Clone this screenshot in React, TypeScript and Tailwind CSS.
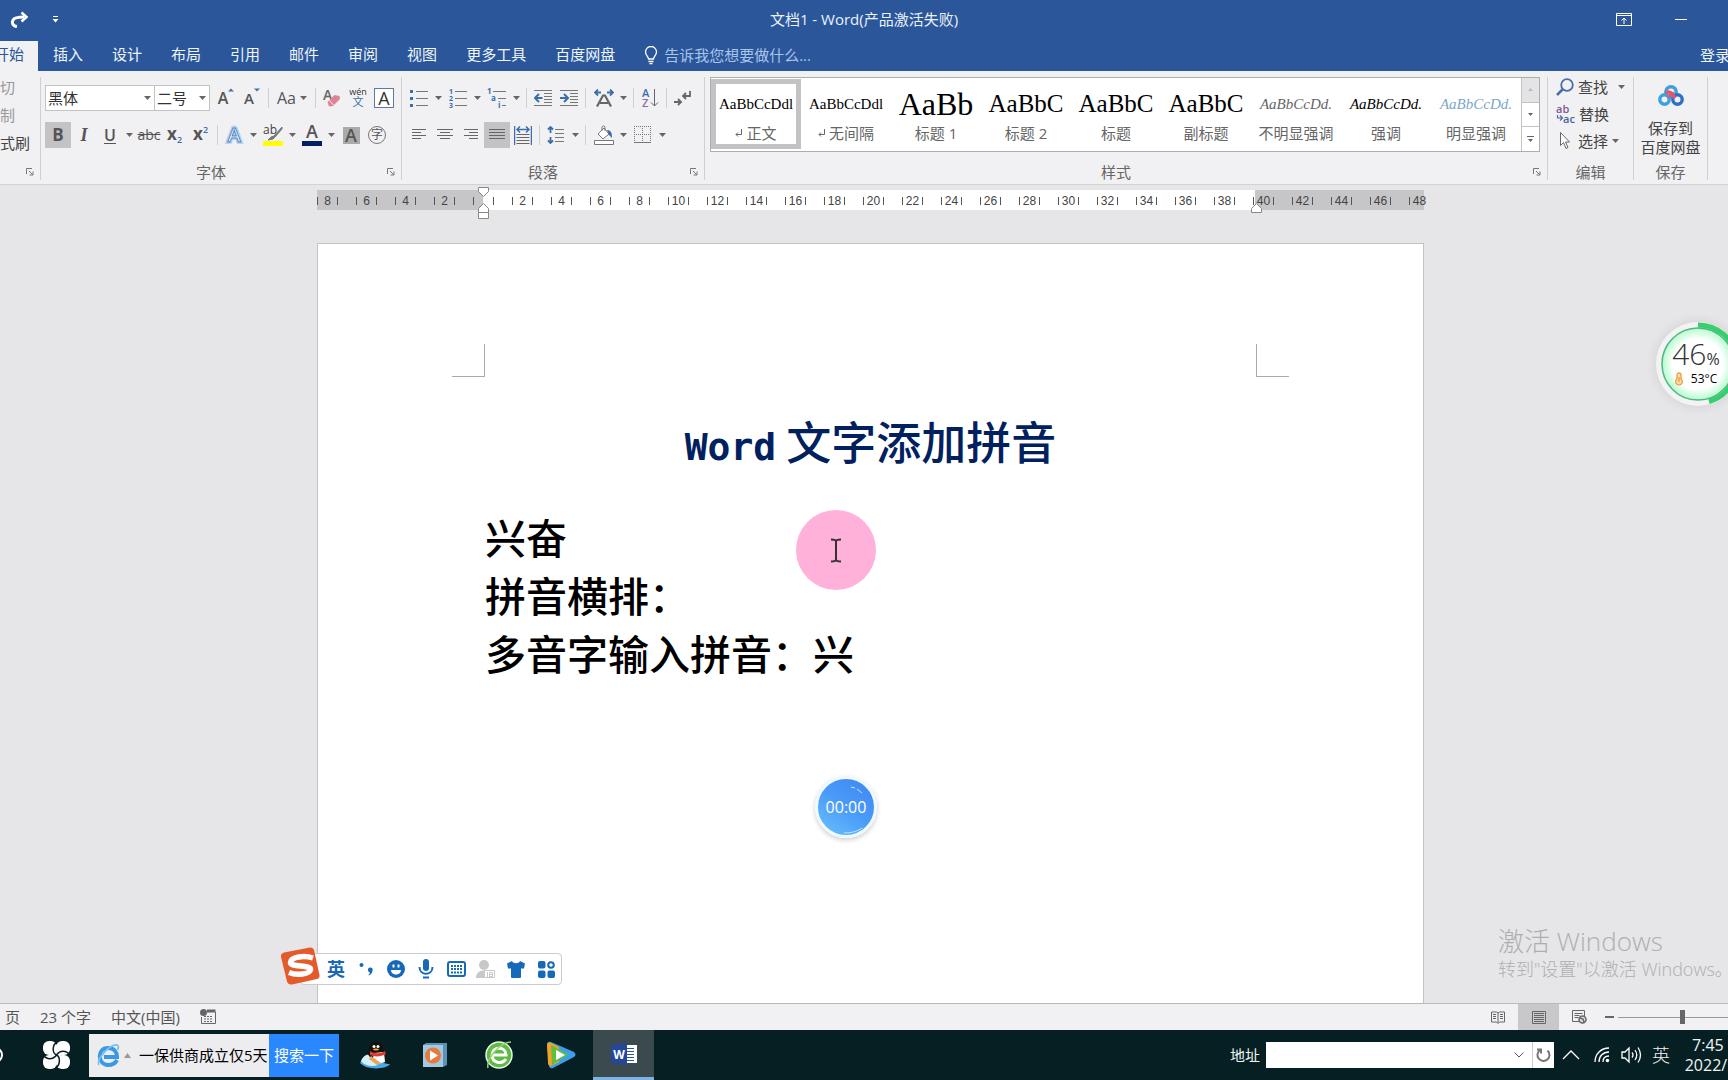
import clsx from 'clsx';
import type { ReactNode } from 'react';

const tabs = ['开始', '插入', '设计', '布局', '引用', '邮件', '审阅', '视图', '更多工具', '百度网盘'];

const rulerMarks = [
  '8', '6', '4', '2', '', '2', '4', '6', '8', '10', '12', '14', '16', '18', '20', '22', '24',
  '26', '28', '30', '32', '34', '36', '38', '40', '42', '44', '46', '48',
];

interface StyleItem {
  name: string;
  sample: string;
  className: string;
  mark?: boolean;
}

const styleItems: StyleItem[] = [
  { name: '正文', sample: 'AaBbCcDdl', className: 'text-[15px] text-black', mark: true },
  { name: '无间隔', sample: 'AaBbCcDdl', className: 'text-[15px] text-black', mark: true },
  { name: '标题 1', sample: 'AaBb', className: 'text-[32px] text-black' },
  { name: '标题 2', sample: 'AaBbC', className: 'text-[25px] text-black' },
  { name: '标题', sample: 'AaBbC', className: 'text-[25px] text-black' },
  { name: '副标题', sample: 'AaBbC', className: 'text-[25px] text-black' },
  { name: '不明显强调', sample: 'AaBbCcDd.', className: 'text-[15px] italic text-[#666]' },
  { name: '强调', sample: 'AaBbCcDd.', className: 'text-[15px] italic text-black' },
  { name: '明显强调', sample: 'AaBbCcDd.', className: 'text-[15px] italic text-[#7da7cc]' },
];

function Caret({ className }: { className?: string }) {
  return (
    <svg width="7" height="4" viewBox="0 0 7 4" className={clsx('shrink-0', className)}>
      <path d="M0 0h7L3.5 4z" fill="#666" />
    </svg>
  );
}

function Divider() {
  return <div className="mx-[3px] h-5 w-px shrink-0 bg-[#d0cfd2]" />;
}

function Tool({ label, active, children }: { label: string; active?: boolean; children: ReactNode }) {
  return (
    <button
      aria-label={label}
      className={clsx('flex h-[26px] w-[26px] shrink-0 items-center justify-center', active && 'bg-[#c3c2c5]')}
    >
      {children}
    </button>
  );
}

function SplitTool({ label, children }: { label: string; children: ReactNode }) {
  return (
    <button aria-label={label} className="flex h-[26px] w-[39px] shrink-0 items-center">
      <span className="flex w-[26px] justify-center">{children}</span>
      <Caret className="ml-[3px]" />
    </button>
  );
}

function Launcher() {
  return (
    <button aria-label="更多选项" className="flex size-5 items-center justify-center">
      <svg width="8" height="8" viewBox="0 0 8 8" fill="none" stroke="#777">
        <path d="M.5 6V.5H6M3 3l3.500 3.500M7 3.500V7H3.500" />
      </svg>
    </button>
  );
}

function Group({
  label,
  launcher,
  className,
  children,
}: {
  label?: string;
  launcher?: boolean;
  className?: string;
  children: ReactNode;
}) {
  return (
    <section className={clsx('flex flex-col', className)}>
      {children}
      <div className="mt-auto mb-[2px] flex h-5 items-center">
        <span className="flex-1 text-center text-[#666]">{label}</span>
        {launcher && <Launcher />}
      </div>
    </section>
  );
}

function GroupDivider() {
  return <div className="mt-1.5 mb-1 w-px shrink-0 bg-[#d0cfd2]" />;
}

function Letter({ children, className }: { children: ReactNode; className: string }) {
  return <span className={clsx('leading-5 text-[#555]', className)}>{children}</span>;
}

/* Four text lines; x and width given per line */
function Lines({ rows }: { rows: [number, number][] }) {
  return (
    <svg width="18" height="14" viewBox="0 0 18 14" stroke="#666">
      {rows.map(([x, w], i) => (
        <path key={i} d={`M${x} ${i * 3 + 1.5}h${w}`} />
      ))}
    </svg>
  );
}

function TitleBar() {
  return (
    <header className="grid h-[41px] grid-cols-[1fr_auto_1fr] items-center pb-0.5 text-[#e9f1fb]">
      <div className="flex items-center pl-2.5">
        <button aria-label="重做" className="flex w-[26px]">
          <svg width="20" height="18" viewBox="0 0 20 18" fill="none" stroke="#fff" strokeWidth="3">
            <path d="M7 15.500c-4.500-.5-5.500-4-4-6.500C4.500 6.500 8 6 14 6" />
            <path d="M11.500 1.500L16.500 6l-5 4.500" strokeWidth="2.500" />
          </svg>
        </button>
        <button aria-label="自定义快速访问工具栏" className="ml-4 flex">
          <svg width="7" height="7" viewBox="0 0 7 7" fill="#fff">
            <path d="M1 0h5v1H1zM0.500 3h6L3.500 6.500z" />
          </svg>
        </button>
      </div>
      <h1 className="pb-0.5">文档1 - Word(产品激活失败)</h1>
      <div className="flex justify-end pr-[19px]">
        <button aria-label="功能区显示选项" className="flex w-[57px] justify-center">
          <svg width="16" height="13" viewBox="0 0 16 13" fill="none" stroke="#fff">
            <path d="M.5.5h15v12H.5zM.5 2.500h15M8 11V5M5.500 7.500L8 5l2.500 2.500" />
          </svg>
        </button>
        <button aria-label="最小化" className="flex w-[57px] items-center justify-center">
          <span className="h-px w-3 bg-white" />
        </button>
      </div>
    </header>
  );
}

function TabBar() {
  return (
    <nav className="-ml-5 flex h-[30px] items-stretch gap-px text-[#eef5fc]">
      {tabs.map((tab, i) => (
        <button
          key={tab}
          className={clsx('shrink-0 px-3.5 pb-1', i === 0 && 'bg-[#f1f0f2] text-[#2b579a]')}
        >
          {tab}
        </button>
      ))}
      <label className="ml-3.5 flex flex-1 items-center gap-1.5 pb-0.5">
        <svg width="14" height="19" viewBox="0 0 14 19" fill="none" stroke="#fff" strokeWidth="1.3">
          <path d="M4.500 13c0-2.500-3-3.500-3-7a5.500 5.500 0 0 1 11 0c0 3.500-3 4.500-3 7zM4.500 15.500h5M5.500 17.700h3" />
        </svg>
        <input
          aria-label="告诉我您想要做什么"
          placeholder="告诉我您想要做什么..."
          className="w-60 bg-transparent outline-none placeholder:text-[#aac3ea]"
        />
      </label>
      <a href="#login" className="-mr-0.5 flex shrink-0 items-center pb-0.5">
        登录
      </a>
    </nav>
  );
}

function FontGroup() {
  return (
    <Group label="字体" launcher className="w-[360px] shrink-0 pt-3.5">
      <div className="flex items-center pl-1">
        <div className="relative">
          <select aria-label="字体" className="h-[26px] w-[110px] appearance-none border border-[#c3c2c5] bg-white pl-0.5 text-[#333]">
            <option>黑体</option>
          </select>
          <Caret className="absolute top-[11px] right-1" />
        </div>
        <div className="relative -ml-px">
          <select aria-label="字号" className="h-[26px] w-14 appearance-none border border-[#c3c2c5] bg-white pl-0.5 text-[#333]">
            <option>二号</option>
          </select>
          <Caret className="absolute top-[11px] right-1" />
        </div>
        <div className="w-[3px]" />
        <Tool label="增大字号">
          <Letter className="flex text-base font-semibold">
            A<svg width="6" height="4" viewBox="0 0 6 4"><path d="M0 3.500L3 .5l3 3z" fill="#4472a8" /></svg>
          </Letter>
        </Tool>
        <Tool label="减小字号">
          <Letter className="flex text-[15px] font-semibold">
            A<svg width="6" height="4" viewBox="0 0 6 4"><path d="M0 .5h6l-3 3z" fill="#4472a8" /></svg>
          </Letter>
        </Tool>
        <Divider />
        <button aria-label="更改大小写" className="flex h-[26px] w-10 items-center justify-center gap-1 text-base text-[#555]">
          Aa
          <Caret />
        </button>
        <Divider />
        <Tool label="清除格式">
          <svg width="18" height="20" viewBox="0 0 18 20">
            <text x="0" y="12" fontSize="14" fontWeight="600" fill="#666">A</text>
            <path d="M4.500 14l7-7 5 1 .5 3-7 7-4 .5z" fill="#df8296" />
            <path d="M6 12l4.500 5" stroke="#f1f0f2" />
          </svg>
        </Tool>
        <Tool label="拼音指南">
          <svg width="18" height="20" viewBox="0 0 18 20" textAnchor="middle">
            <text x="9" y="7" fontSize="9" fill="#333">wén</text>
            <text x="9" y="18" fontSize="11" fill="#3c6fa8">文</text>
          </svg>
        </Tool>
        <Tool label="字符边框">
          <span className="flex size-5 items-center justify-center border border-[#5d7a9c] bg-white text-lg leading-5 text-[#333]">A</span>
        </Tool>
      </div>
      <div className="mt-[11px] flex items-center pl-1">
        <Tool label="加粗" active>
          <Letter className="text-[17px] font-bold">B</Letter>
        </Tool>
        <Tool label="倾斜">
          <Letter className="font-['Liberation_Serif'] text-lg font-bold italic">I</Letter>
        </Tool>
        <SplitTool label="下划线">
          <Letter className="text-base font-semibold underline underline-offset-2">U</Letter>
        </SplitTool>
        <Tool label="删除线">
          <span className="text-sm leading-4 text-[#555] line-through">abc</span>
        </Tool>
        <Tool label="下标">
          <svg width="18" height="18" viewBox="0 0 18 18">
            <text x="1" y="14" fontSize="17" fontWeight="700" fill="#555">x</text>
            <text x="11" y="17" fontSize="9" fontWeight="600" fill="#3c6fa8">2</text>
          </svg>
        </Tool>
        <Tool label="上标">
          <svg width="18" height="18" viewBox="0 0 18 18">
            <text x="1" y="14" fontSize="17" fontWeight="700" fill="#555">x</text>
            <text x="11" y="7" fontSize="9" fontWeight="600" fill="#3c6fa8">2</text>
          </svg>
        </Tool>
        <Divider />
        <SplitTool label="文本效果">
          <svg width="20" height="20" viewBox="0 0 20 20">
            <text x="10" y="17" fontSize="20" textAnchor="middle" fontWeight="600" fill="#fff" stroke="#bcd6ef" strokeWidth="4" paintOrder="stroke">A</text>
            <text x="10" y="17" fontSize="20" textAnchor="middle" fontWeight="600" fill="#fff" stroke="#4a86c4" strokeWidth="1">A</text>
          </svg>
        </SplitTool>
        <SplitTool label="突出显示">
          <svg width="20" height="22" viewBox="0 0 20 22">
            <text x="0" y="10" fontSize="12" fill="#444">ab</text>
            <path d="M19 3l-8 9-3 1-3 3 5-1 2-2 7-8z" fill="#777" stroke="#777" />
            <path d="M0 17h20v5H0z" fill="#ffff00" />
          </svg>
        </SplitTool>
        <SplitTool label="字体颜色">
          <svg width="20" height="22" viewBox="0 0 20 22">
            <text x="10" y="14" fontSize="18" textAnchor="middle" fontWeight="600" fill="#555">A</text>
            <path d="M0 17h20v5H0z" fill="#002060" />
          </svg>
        </SplitTool>
        <Tool label="字符底纹">
          <span className="flex h-[17px] w-[17px] items-center justify-center bg-[#aaa] text-lg leading-4 font-semibold text-[#555]">A</span>
        </Tool>
        <Tool label="带圈字符">
          <span className="flex size-[18px] items-center justify-center rounded-full border border-[#777] text-xs leading-4 text-[#555]">字</span>
        </Tool>
      </div>
    </Group>
  );
}

function ParagraphGroup() {
  return (
    <Group label="段落" launcher className="w-[302px] shrink-0 pt-3.5">
      <div className="flex items-center pl-1">
        <SplitTool label="项目符号">
          <svg width="18" height="18" viewBox="0 0 18 18">
            <path d="M6 2.500h12M6 9.500h12M6 16.500h12" stroke="#777" />
            <path d="M0 1h3v3H0zM0 8h3v3H0zM0 15h3v3H0z" fill="#3c6fa8" />
          </svg>
        </SplitTool>
        <SplitTool label="编号">
          <svg width="18" height="20" viewBox="0 0 18 20" fontSize="7" fontWeight="700" fill="#3c6fa8">
            <path d="M6 3.500h12M6 10.500h12M6 17.500h12" stroke="#777" />
            <text x="0" y="6">1</text>
            <text x="0" y="13">2</text>
            <text x="0" y="20">3</text>
          </svg>
        </SplitTool>
        <SplitTool label="多级列表">
          <svg width="20" height="20" viewBox="0 0 20 20" fontSize="8" fontWeight="700" fill="#3c6fa8">
            <path d="M6 3.500h13M11 10.500h8M15 17.500h4" stroke="#777" />
            <text x="0" y="6">1</text>
            <text x="4" y="13">a</text>
            <text x="11" y="20">i</text>
          </svg>
        </SplitTool>
        <Divider />
        <Tool label="减少缩进量">
          <svg width="18" height="17" viewBox="0 0 18 17" fill="none" stroke="#777">
            <path d="M0 .5h18M10 3.500h8M10 6.500h8M10 9.500h8M10 12.500h8M0 15.500h18" />
            <path d="M8.500 8h-7M5 4L1 8l4 4" stroke="#3c6fa8" strokeWidth="2" />
          </svg>
        </Tool>
        <Tool label="增加缩进量">
          <svg width="18" height="17" viewBox="0 0 18 17" fill="none" stroke="#777">
            <path d="M0 .5h18M10 3.500h8M10 6.500h8M10 9.500h8M10 12.500h8M0 15.500h18" />
            <path d="M0 8h7M4 4l4 4-4 4" stroke="#3c6fa8" strokeWidth="2" />
          </svg>
        </Tool>
        <Divider />
        <div className="ml-0.5 flex">
          <SplitTool label="中文版式">
            <svg width="20" height="18" viewBox="0 0 20 18" fill="none">
              <path d="M1 3.500h6M4 .5l-3 3 3 3M13 3.500h6M16 .5l3 3-3 3" stroke="#3c6fa8" strokeWidth="1.800" />
              <path d="M3 17.500l6-11h2l6 11M6 14h8" stroke="#666" strokeWidth="2.200" />
            </svg>
          </SplitTool>
        </div>
        <Divider />
        <Tool label="排序">
          <svg width="18" height="20" viewBox="0 0 18 20" fontSize="11" fontWeight="600">
            <text x="1" y="9" fill="#3c6fa8">A</text>
            <text x="1" y="19" fill="#8b6aa8">Z</text>
            <path d="M13.500 1v17M10 14.500l3.500 3.500 3.500-3.500" fill="none" stroke="#666" />
          </svg>
        </Tool>
        <Divider />
        <Tool label="显示编辑标记">
          <svg width="18" height="16" viewBox="0 0 18 16" fill="none" stroke="#666" strokeWidth="1.800">
            <path d="M16 1v5H9M12 3L9 6l3 3M0 12h7M4 9l3 3-3 3" />
          </svg>
        </Tool>
      </div>
      <div className="mt-[11px] flex items-center pl-1">
        <Tool label="左对齐"><Lines rows={[[2, 14], [2, 9], [2, 14], [2, 9]]} /></Tool>
        <Tool label="居中"><Lines rows={[[1, 16], [4, 10], [1, 16], [4, 10]]} /></Tool>
        <Tool label="右对齐"><Lines rows={[[2, 14], [7, 9], [2, 14], [7, 9]]} /></Tool>
        <Tool label="两端对齐" active><Lines rows={[[1, 16], [1, 16], [1, 16], [1, 16]]} /></Tool>
        <Tool label="分散对齐">
          <svg width="18" height="19" viewBox="0 0 18 19" fill="none" stroke="#666">
            <path d="M2.500 8.500h13M2.500 11.500h13M2.500 14.500h13M2.500 17.500h13" />
            <path d="M.5 0v19M17.500 0v19M3 3.500h12M6 .5l-3 3 3 3M12 .5l3 3-3 3" stroke="#3c6fa8" strokeWidth="1.500" />
          </svg>
        </Tool>
        <Divider />
        <SplitTool label="行和段落间距">
          <svg width="18" height="18" viewBox="0 0 18 18" fill="none" stroke="#777">
            <path d="M8 3.500h9M8 7.500h9M8 11.500h9M8 15.500h9" />
            <path d="M3.500 1v6M1 3.500L3.500 1 6 3.500M3.500 11v6M1 14.500L3.500 17 6 14.500" stroke="#3c6fa8" strokeWidth="1.800" />
          </svg>
        </SplitTool>
        <Divider />
        <div className="ml-0.5 flex">
          <SplitTool label="底纹">
            <svg width="20" height="20" viewBox="0 0 20 20" fill="none" stroke="#777">
              <path d="M4 9l6-6 5 6-6 5z" fill="#fff" />
              <path d="M8 6V2.500a1.500 1.500 0 0 1 3 0V6" />
              <path d="M13 5c4 0 5 3 5 8l-3-3z" fill="#3c6fa8" stroke="none" />
              <path d="M.5 15.500h19v4H.5z" fill="#fff" />
            </svg>
          </SplitTool>
          <SplitTool label="边框">
            <svg width="18" height="18" viewBox="0 0 18 18" fill="none" stroke="#777" strokeDasharray="1 1">
              <path d="M0 .5h17M.5 0v17M8.500 0v17M16.500 0v17M0 8.500h17" />
              <path d="M0 16.500h17" strokeDasharray="none" />
            </svg>
          </SplitTool>
        </div>
      </div>
    </Group>
  );
}

function StylesGroup() {
  return (
    <Group label="样式" launcher className="min-w-0 flex-1 pt-1.5">
      <div className="mr-[7px] ml-[5px] flex h-[75px] border border-[#aeadb0] bg-white">
        <div className="flex min-w-0 flex-1 overflow-hidden">
          {styleItems.map((item, i) => (
            <button
              key={item.name}
              className={clsx(
                'mt-px flex h-[70px] w-[90px] shrink-0 flex-col items-center border-[5px] px-0.5',
                i === 0 ? 'border-[#c3c2c5]' : 'border-transparent',
              )}
            >
              <span
                className={clsx(
                  "h-[39px] font-['Liberation_Serif'] leading-10 whitespace-nowrap",
                  item.className,
                )}
              >
                {item.sample}
              </span>
              <span className="flex items-center gap-1 leading-5 text-[#666]">
                {item.mark && (
                  <svg width="7" height="8" viewBox="0 0 7 8" fill="none" stroke="#666">
                    <path d="M6.500 0v5.500H1M3 3.500l-2 2 2 2" />
                  </svg>
                )}
                {item.name}
              </span>
            </button>
          ))}
        </div>
        <div className="flex w-[18px] flex-col divide-y divide-[#c3c2c5] border-l border-[#c3c2c5]">
          <button aria-label="上一行" className="flex flex-1 items-center justify-center bg-[#e4e3e5]">
            <svg width="5" height="3" viewBox="0 0 5 3"><path d="M0 3L2.500 0 5 3z" fill="#bbb" /></svg>
          </button>
          <button aria-label="下一行" className="flex flex-1 items-center justify-center">
            <svg width="5" height="3" viewBox="0 0 5 3"><path d="M0 0h5L2.500 3z" fill="#666" /></svg>
          </button>
          <button aria-label="其他" className="flex flex-1 items-center justify-center">
            <svg width="7" height="6" viewBox="0 0 7 6" fill="#666"><path d="M0 0h7v1H0zM1 3h5L3.500 6z" /></svg>
          </button>
        </div>
      </div>
    </Group>
  );
}

function EditGroup() {
  return (
    <Group label="编辑" className="w-[85px] shrink-0 pt-0.5">
      <div className="flex flex-col pl-2 text-[#444]">
        <button className="flex h-[27px] items-center gap-1">
          <svg width="18" height="18" viewBox="0 0 18 18" fill="none" stroke="#4a6da7">
            <circle cx="11" cy="7" r="5.800" strokeWidth="1.800" />
            <path d="M7 11l-6 6" strokeWidth="2.500" />
          </svg>
          查找
          <Caret className="ml-1.5" />
        </button>
        <button className="flex h-[27px] items-center gap-1">
          <svg width="19" height="20" viewBox="0 0 19 20" fontSize="11" fontWeight="600">
            <text x="0" y="9" fill="#7d5a96">ab</text>
            <text x="7" y="19" fill="#44699b">ac</text>
            <path d="M1.500 11v3H6M4 11.500L6.500 14 4 16.500" fill="none" stroke="#4a6da7" strokeWidth="1.200" />
          </svg>
          替换
        </button>
        <button className="flex h-[27px] items-center gap-1">
          <svg width="18" height="19" viewBox="0 0 18 19" fill="#fff" stroke="#666">
            <path d="M4.500 1.500v13l3-3 2.500 6 2-1-2.500-5.500h4z" />
          </svg>
          选择
          <Caret />
        </button>
      </div>
    </Group>
  );
}

function SaveGroup() {
  return (
    <Group label="保存" className="w-[73px] shrink-0 pt-3.5">
      <button className="flex flex-col items-center text-[#444]">
        <svg width="26" height="22" viewBox="0 0 26 22" fill="none" strokeWidth="3.400">
          <circle cx="13" cy="7" r="5.200" stroke="#3d9fdc" />
          <circle cx="6.500" cy="14.500" r="4.700" stroke="#39a3dd" />
          <circle cx="19.500" cy="14.500" r="4.700" stroke="#2f6fc4" />
          <path d="M8 8.500c2-2.500 4.500-1.500 6 .5l3 4" stroke="#e0566b" />
          <path d="M9.500 12.500l3.500-3.500 3-1.500" stroke="#e0566b" strokeWidth="2.500" />
        </svg>
        <span className="mt-3 leading-[19px]">
          保存到
          <br />
          百度网盘
        </span>
      </button>
    </Group>
  );
}

function Ribbon() {
  return (
    <div className="flex h-[114px] border-b border-[#d2d1d4] bg-[#f1f0f2]">
      <section className="flex w-10 shrink-0 flex-col pt-0.5">
        <button className="h-7 text-left text-[#999]">切</button>
        <button className="h-7 text-left text-[#999]">制</button>
        <button className="h-7 text-left text-[#444]">式刷</button>
        <div className="mt-auto mb-[2px] flex justify-end">
          <Launcher />
        </div>
      </section>
      <GroupDivider />
      <FontGroup />
      <GroupDivider />
      <ParagraphGroup />
      <GroupDivider />
      <StylesGroup />
      <GroupDivider />
      <EditGroup />
      <GroupDivider />
      <SaveGroup />
      <GroupDivider />
      <div className="w-5 shrink-0" />
    </div>
  );
}

function Ruler() {
  return (
    <div className="relative flex h-5 w-full max-w-[1107px] bg-[linear-gradient(to_right,#c6c5c8_166px,#fff_166px,#fff_938px,#c6c5c8_938px)] pt-0.5 text-xs text-[#444]">
      {rulerMarks.map((mark, i) => (
        <div key={i} className="flex w-[39px] shrink-0 items-center">
          <span className="h-2 w-px bg-[#555]" />
          <span className="w-[19px] text-center font-['Liberation_Sans']">{mark}</span>
          {i < rulerMarks.length - 1 && <span className="h-2 w-px bg-[#555]" />}
        </div>
      ))}
      <svg width="12" height="32" viewBox="0 0 12 32" className="absolute -top-[3px] left-[161px]" fill="#fff" stroke="#888">
        <path d="M.5.500h10v4l-5 5-5-5zM5.500 16.500l5 5v4H.5v-4zM.5 25.500h10v6H.5z" />
      </svg>
      <svg width="12" height="10" viewBox="0 0 12 10" className="absolute top-[13px] left-[934px]" fill="#fff" stroke="#888">
        <path d="M5.500.5l5 5v4H.5v-4z" />
      </svg>
    </div>
  );
}

function Page() {
  return (
    <article className="mt-[33px] w-full max-w-[1107px] flex-1 border border-b-0 border-[#c3c2c5] bg-white pt-[100px] pb-60 font-['Noto_Sans_CJK_SC',sans-serif]">
      <div className="flex justify-between px-[134px]">
        <div className="size-[33px] border-r border-b border-[#aaa]" />
        <div className="size-[33px] border-b border-l border-[#aaa]" />
      </div>
      <div className="px-[167px]">
        <h2 className="mt-8 text-center text-[45px] leading-[64px] font-medium text-[#002060]">
          <span className="font-['DejaVu_Sans_Mono',monospace] text-[38px] font-bold">Word</span> 文字添加拼音
        </h2>
        <div className="mt-7 text-[41px] leading-[58px] font-medium text-black">
          <p>兴奋</p>
          <p>拼音横排：</p>
          <p>多音字输入拼音：兴</p>
        </div>
      </div>
    </article>
  );
}

function SogouBar() {
  return (
    <div className="absolute bottom-[18px] left-[280px] flex items-center text-[#1668b8]">
      <div className="ml-5 flex h-8 items-center rounded-sm border border-[#c9cbd6] bg-white pl-5">
        <button className="w-[30px] text-lg leading-6 font-bold">英</button>
        <button aria-label="标点" className="flex w-[30px] justify-center">
          <svg width="14" height="14" viewBox="0 0 14 14" fill="currentColor">
            <circle cx="2.500" cy="3" r="2" />
            <path d="M9 8a2.300 2.300 0 1 1 4.500.5c0 2-1.500 4-3.500 5l-.5-.8c1.200-.7 1.500-1.500 1.500-2.200C10 10.300 9 9.500 9 8z" />
          </svg>
        </button>
        <button aria-label="表情" className="flex w-[30px] justify-center">
          <svg width="18" height="18" viewBox="0 0 18 18">
            <circle cx="9" cy="9" r="9" fill="currentColor" />
            <path d="M5.500 4.500h2v3h-2zM10.500 4.500h2v3h-2zM4 10h10c0 6-10 6-10 0z" fill="#fff" />
          </svg>
        </button>
        <button aria-label="语音" className="flex w-[30px] justify-center">
          <svg width="16" height="20" viewBox="0 0 16 20" fill="none" stroke="currentColor" strokeWidth="2">
            <rect x="5" y="0" width="6" height="12" rx="3" fill="currentColor" stroke="none" />
            <path d="M1.500 8c0 9 13 9 13 0M5 18.500h6" />
          </svg>
        </button>
        <button aria-label="软键盘" className="flex w-[30px] justify-center">
          <svg width="19" height="16" viewBox="0 0 19 16">
            <rect x="1" y="1" width="17" height="14" rx="2" fill="none" stroke="currentColor" strokeWidth="2" />
            <path d="M4 5h11M4 8h11M4 11.500h11" stroke="currentColor" strokeWidth="2" strokeDasharray="2 1" />
          </svg>
        </button>
        <button aria-label="登录" className="flex w-[30px] justify-center text-[#c8c8ca]">
          <svg width="20" height="19" viewBox="0 0 20 19">
            <circle cx="8" cy="5" r="5" fill="currentColor" />
            <path d="M0 18c0-5 3-7.500 8-7.500v7.500z" fill="currentColor" />
            <path d="M8.500 10.500h10v7h-10z" fill="#fff" stroke="currentColor" />
            <path d="M11.500 12v5M13.500 12.500h3v4h-3zM13.500 14.500h3" fill="none" stroke="currentColor" />
          </svg>
        </button>
        <button aria-label="皮肤" className="flex w-[30px] justify-center">
          <svg width="18" height="17" viewBox="0 0 18 17" fill="currentColor">
            <path d="M5 0c1 3 7 3 8 0l5 2.500-1 5h-3V16q0 1-1 1H5q-1 0-1-1V7.500H1l-1-5z" />
          </svg>
        </button>
        <button aria-label="工具箱" className="flex w-[30px] justify-center">
          <svg width="17" height="17" viewBox="0 0 17 17" fill="currentColor">
            <rect width="7.500" height="7.500" rx="2" />
            <circle cx="13" cy="4" r="2.800" fill="none" stroke="currentColor" strokeWidth="2" />
            <rect y="9.500" width="7.500" height="7.500" rx="2" />
            <rect x="9.500" y="9.500" width="7.500" height="7.500" rx="2" />
          </svg>
        </button>
      </div>
      <svg width="40" height="38" viewBox="0 0 40 38" className="absolute -top-1.5 left-0">
        <path d="M4 5.500L30 .5q3-.5 4 2.500l5.500 25q.5 3-2.500 4L12 37.500q-4 .5-5-3L1 10q-.5-3.500 3-4.500z" fill="#e55a2a" />
        <path d="M33 11C24 8 11 10 10.500 15.500 10 20.500 31 17.500 30.500 22.500 30 27.500 16 28.500 9 25.500" fill="none" stroke="#fff" strokeWidth="5.500" />
      </svg>
    </div>
  );
}

function LoadBall() {
  return (
    <div className="absolute top-[137px] -right-3 flex size-[84px] flex-col items-center rounded-full bg-[#f3f3f3] pr-1 shadow-[0_0_8px_3px_rgba(0,0,0,0.06)]">
      <svg width="84" height="84" viewBox="0 0 84 84" className="absolute inset-0">
        <defs>
          <radialGradient id="ball">
            <stop offset="0.700" stopColor="#fff" />
            <stop offset="1" stopColor="#b4fbcb" />
          </radialGradient>
        </defs>
        <path d="M42 3a39 39 0 0 1 11 76.500" fill="none" stroke="#35cf6b" strokeWidth="5" />
        <circle cx="42" cy="42" r="36" fill="url(#ball)" stroke="#4fb585" strokeWidth="1.500" />
      </svg>
      <div className="relative mt-4 font-['Open_Sans'] text-[30px] leading-8 font-light text-[#333]">
        46<span className="text-base font-normal">%</span>
      </div>
      <div className="relative flex items-center gap-2 text-xs leading-4 text-black">
        <svg width="8" height="14" viewBox="0 0 8 14" fill="#fbe0a8" stroke="#ef9a3c" strokeWidth="1.300">
          <path d="M2 7V3a2 2 0 0 1 4 0v4a3.300 3.300 0 1 1-4 0zM4 5v5" />
        </svg>
        53°C
      </div>
    </div>
  );
}

function Workspace() {
  return (
    <main className="relative flex flex-1 flex-col items-center bg-[#e6e6e8] pt-[5px] pl-[13px]">
      <Ruler />
      <Page />

      {/* Click highlight with the text cursor in it */}
      <div className="absolute top-[325px] left-1/2 -ml-[68px] flex size-20 items-center justify-center rounded-full bg-[#ffb1d9]">
        <svg width="10" height="25" viewBox="0 0 10 25" fill="none" stroke="#333" strokeWidth="2">
          <path d="M0 1.500c3 0 5 .5 5 2v18c0 1.500-2 2-5 2M10 1.500c-3 0-5 .5-5 2v18c0 1.500 2 2 5 2" />
        </svg>
      </div>

      <div className="absolute top-[591px] left-1/2 -ml-[49px] flex size-[62px] items-center justify-center rounded-full border-[3px] border-[#eefaff] bg-[linear-gradient(215deg,#3f86f3,#4a9bf8_50%,#68c2fd)] text-base text-white shadow-[0_2px_5px_rgba(0,0,0,0.2)]">
        00:00
        <svg width="56" height="56" viewBox="0 0 56 56" fill="none" stroke="#cbe6ff" className="absolute inset-0">
          <path d="M33 8l4 1M39 10l5 4M26 54c8 0 14-2 18-5" />
        </svg>
      </div>

      <LoadBall />
      <SogouBar />

      <div className="absolute right-0 bottom-5 w-[230px] whitespace-nowrap text-[#aeaeb1]">
        <p className="text-[26px] leading-7 font-light">激活 Windows</p>
        <p className="text-lg leading-7 font-light">转到"设置"以激活 Windows。</p>
      </div>
    </main>
  );
}

function StatusBar() {
  return (
    <footer className="flex h-[27px] items-center border-t border-[#b9b8bb] bg-[#f1f0f2] pl-[5px] text-[#555]">
      <span>页</span>
      <span className="ml-5">23 个字</span>
      <span className="ml-5">中文(中国)</span>
      <svg width="16" height="16" viewBox="0 0 16 16" className="ml-5" fill="none" stroke="#666">
        <circle cx="3.500" cy="3.500" r="3.500" fill="#666" stroke="none" />
        <path d="M7 2h8.500" strokeWidth="3" />
        <path d="M1.500 8v6.500h14V3" />
        <path d="M4 7.500h9M4 10h9M4 12.500h9" strokeDasharray="2 1" />
      </svg>
      <div className="ml-auto flex h-full items-center">
        <button aria-label="阅读视图" className="flex h-full w-10 items-center justify-center">
          <svg width="14" height="13" viewBox="0 0 14 13" fill="none" stroke="#666">
            <path d="M.5 1h5l1.500 1 1.500-1h5v10h-5L7 12.500 5.500 11h-5zM7 2v10M2 3.500h3M2 5.500h3M2 7.500h3M9 3.500h3M9 5.500h3M9 7.500h3" />
          </svg>
        </button>
        <button aria-label="页面视图" className="flex h-full w-[41px] items-center justify-center bg-[#c8c7ca]">
          <svg width="14" height="13" viewBox="0 0 14 13" fill="none" stroke="#666">
            <path d="M.5.500h13v12H.5zM2 2.500h10M2 4.500h10M2 6.500h10M2 8.500h10M2 10.500h10" />
          </svg>
        </button>
        <button aria-label="Web 版式视图" className="flex h-full w-10 items-center justify-center">
          <svg width="15" height="14" viewBox="0 0 15 14" fill="none" stroke="#666">
            <path d="M7 11.500H.5V.5h12V6M2.500 3.500h8M2.500 5.500h5M2.500 7.500h4" />
            <circle cx="10.500" cy="9.500" r="3.500" fill="#ddd" strokeWidth="1.500" />
            <path d="M8 8l3 1 1 3" strokeWidth="1.500" />
          </svg>
        </button>
        <button aria-label="缩小" className="ml-1.5 flex h-full w-[9px] items-center">
          <span className="h-0.5 w-full bg-[#666]" />
        </button>
        <input
          type="range"
          aria-label="缩放"
          defaultValue={50}
          className="-mr-[18px] ml-1 h-full w-32 appearance-none bg-[linear-gradient(#999,#999)] bg-[length:100%_1px] bg-center bg-no-repeat [&::-webkit-slider-thumb]:h-3.5 [&::-webkit-slider-thumb]:w-[5px] [&::-webkit-slider-thumb]:appearance-none [&::-webkit-slider-thumb]:bg-[#666]"
        />
      </div>
    </footer>
  );
}

function Taskbar() {
  return (
    <div className="flex h-[50px] items-center bg-[#061f22] text-[#eef5f5]">
      <button aria-label="搜索" className="w-[3px] overflow-hidden">
        <span className="block size-4 -translate-x-[13px] rounded-full border-2 border-white" />
      </button>
      <button aria-label="风车" className="ml-[39px] flex">
        <svg width="29" height="28" viewBox="0 0 29 28" fill="#fff">
          <rect x="1" y="0" width="14" height="14" rx="6" />
          <rect x="14" y="0" width="14" height="14" rx="6" />
          <rect x="1" y="14" width="14" height="14" rx="6" />
          <rect x="14" y="14" width="14" height="14" rx="6" />
          <path d="M10 9h9v10h-9z" />
          <path d="M14.500 14C10 12 10 4 15 1M14.500 14C18 9 24 9 28 14M14.500 14c4 2 4 10-1 13M14.500 14C11 19 5 19 1 14" fill="none" stroke="#061f22" strokeWidth="1.500" />
        </svg>
      </button>
      <div className="ml-[18px] flex h-[43px] items-center bg-[#ededf0] pl-2">
        <svg width="23" height="24" viewBox="0 0 23 24" fill="none">
          <path d="M20 17c-2 4-6 5-9 5-11-1-11-17 0-17 6 0 9 4 9 9H7" stroke="#3b98e4" strokeWidth="4" />
          <path d="M2 22C-1 16 13 1 20 2c2 .5 1.500 3 .5 5" stroke="#7cc0f2" strokeWidth="1.800" />
        </svg>
        <svg width="7" height="5" viewBox="0 0 7 5" className="ml-1"><path d="M0 5L3.500 0 7 5z" fill="#999" /></svg>
        <input
          aria-label="搜索内容"
          defaultValue="一保供商成立仅5天"
          className="ml-2 w-[130px] bg-transparent text-black outline-none"
        />
        <button className="h-full w-[70px] bg-[#2a88ff] text-white">搜索一下</button>
      </div>
      <button aria-label="QQ" className="ml-[21px] flex">
        <svg width="30" height="28" viewBox="0 0 30 28">
          <path d="M0 22c4-7 8-10 14-7 5 3 10 9 16 8-3 5-22 7-30-1z" fill="#4aa9e4" />
          <path d="M1 20c2-5 6-8 11-5l6 9c-6 2-13 1-17-4z" fill="#d5effb" />
          <ellipse cx="16" cy="7" rx="7" ry="6.500" fill="#111" />
          <path d="M7 11c5-3 14-3 19 0l-2 7-9 3-6-6z" fill="#111" />
          <path d="M14 12l10-1 1 10-7 2-5-6z" fill="#fff" />
          <path d="M10 10c5 3 10 3 15 0l1 3c-5 3-12 3-16 1z" fill="#e23a2c" />
          <path d="M11 15l10 7-4 2-8-6z" fill="#e8a35a" />
          <circle cx="14" cy="5.500" r="1.500" fill="#fff" />
          <circle cx="18" cy="5.500" r="1.500" fill="#fff" />
          <ellipse cx="16" cy="8.500" rx="3" ry="1" fill="#f5a623" />
        </svg>
      </button>
      <button aria-label="播放器" className="ml-[33px] flex">
        <svg width="25" height="26" viewBox="0 0 25 26">
          <path d="M0 3l3-2h21v22l-4 2H0z" fill="#5b92b8" />
          <path d="M0 3h20v22H0z" fill="#a4c9de" />
          <circle cx="10" cy="13.500" r="8" fill="#e57a3c" />
          <path d="M7 8.500l8 5-8 5z" fill="#fff" />
        </svg>
      </button>
      <button aria-label="360浏览器" className="ml-[37px] flex">
        <svg width="28" height="28" viewBox="0 0 28 28" fill="none">
          <circle cx="14" cy="14" r="13" fill="#5fb946" stroke="#e8f7e2" strokeWidth="1.500" />
          <path d="M21 18c-4 6-14 4-14-4 0-9 14-9 14 0H8" stroke="#fff" strokeWidth="3" />
          <path d="M3 27C1 18 14 2 26 1" stroke="#8fd66f" strokeWidth="1.500" />
        </svg>
      </button>
      <button aria-label="腾讯视频" className="ml-[33px] flex">
        <svg width="30" height="28" viewBox="0 0 30 28">
          <path d="M1 4q0-4 4-3l23 10q3 3 0 5L7 27q-4 1-4-3z" fill="#3f9ee6" />
          <path d="M1 4q0-3 3-2.500L13 6v15l-8 4q-3 0-3-3z" fill="#f5a02a" />
          <path d="M5 4l17 9.500L6 24z" fill="#5fbf3a" />
          <path d="M10 9l9 5-9 5z" fill="#fff" />
        </svg>
      </button>
      <button aria-label="Word" className="ml-[17px] flex h-full w-[61px] items-center justify-center border-b-[3px] border-[#7db3e6] bg-[#3a4a4d]">
        <svg width="26" height="22" viewBox="0 0 26 22">
          <path d="M15 2h11v18H15z" fill="#fff" />
          <path d="M16 5.500h7M16 8.500h7M16 11.500h7M16 14.500h7M16 17.500h7" stroke="#2b579a" />
          <path d="M0 2l16-2v22L0 20z" fill="#24479a" />
          <text x="8" y="15.500" fontSize="12" fontWeight="700" textAnchor="middle" fill="#fff">W</text>
        </svg>
      </button>

      <div className="ml-auto flex h-full items-center">
        <label htmlFor="address">地址</label>
        <div className="ml-1.5 flex h-[26px] items-center bg-white">
          <input id="address" className="h-full w-[248px] px-1 text-black outline-none" />
          <button aria-label="展开" className="flex w-[18px]">
            <svg width="10" height="6" viewBox="0 0 10 6" fill="none" stroke="#555">
              <path d="M.5.500L5 5 9.500.5" />
            </svg>
          </button>
          <button aria-label="刷新" className="flex h-full w-[22px] items-center justify-center border-l border-[#ccc]">
            <svg width="15" height="16" viewBox="0 0 15 16" fill="none" stroke="#777" strokeWidth="2">
              <path d="M11.500 3.500a6 6 0 1 1-7.500-.5M1 2.500h4v4" />
            </svg>
          </button>
        </div>
        <button aria-label="显示隐藏的图标" className="ml-2 flex">
          <svg width="18" height="10" viewBox="0 0 18 10" fill="none" stroke="#fff" strokeWidth="1.300">
            <path d="M1 9l8-8 8 8" />
          </svg>
        </button>
        <button aria-label="网络" className="ml-3.5 flex">
          <svg width="17" height="16" viewBox="0 0 17 16" fill="none" stroke="#fff" strokeWidth="1.300">
            <path d="M1 15C1 7 7 1 15 1M5 15c0-6 4-10 10-10M9 15c0-4 2-6 6-6" />
            <circle cx="13.500" cy="13.500" r="1.800" fill="#fff" stroke="none" />
          </svg>
        </button>
        <button aria-label="音量" className="ml-2.5 flex">
          <svg width="21" height="18" viewBox="0 0 21 18" fill="none" stroke="#fff" strokeWidth="1.300">
            <path d="M1 6h3l4-4v14l-4-4H1zM11 6.500q2 2.500 0 5M14 4q3.500 5 0 10M17 1.500q5 7.500 0 15" />
          </svg>
        </button>
        <button className="ml-2.5 text-lg font-light">英</button>
        <time className="-mr-6 ml-3.5 w-[68px] text-center text-base leading-5 whitespace-nowrap">
          7:45 周
          <br />
          2022/5/1
        </time>
      </div>
    </div>
  );
}

export default function App() {
  return (
    <div className="flex min-h-screen flex-col overflow-hidden bg-[#2b579a] font-['Open_Sans','Noto_Sans_CJK_SC',sans-serif] text-[15px] leading-5">
      <TitleBar />
      <TabBar />
      <Ribbon />
      <Workspace />
      <StatusBar />
      <Taskbar />
    </div>
  );
}
